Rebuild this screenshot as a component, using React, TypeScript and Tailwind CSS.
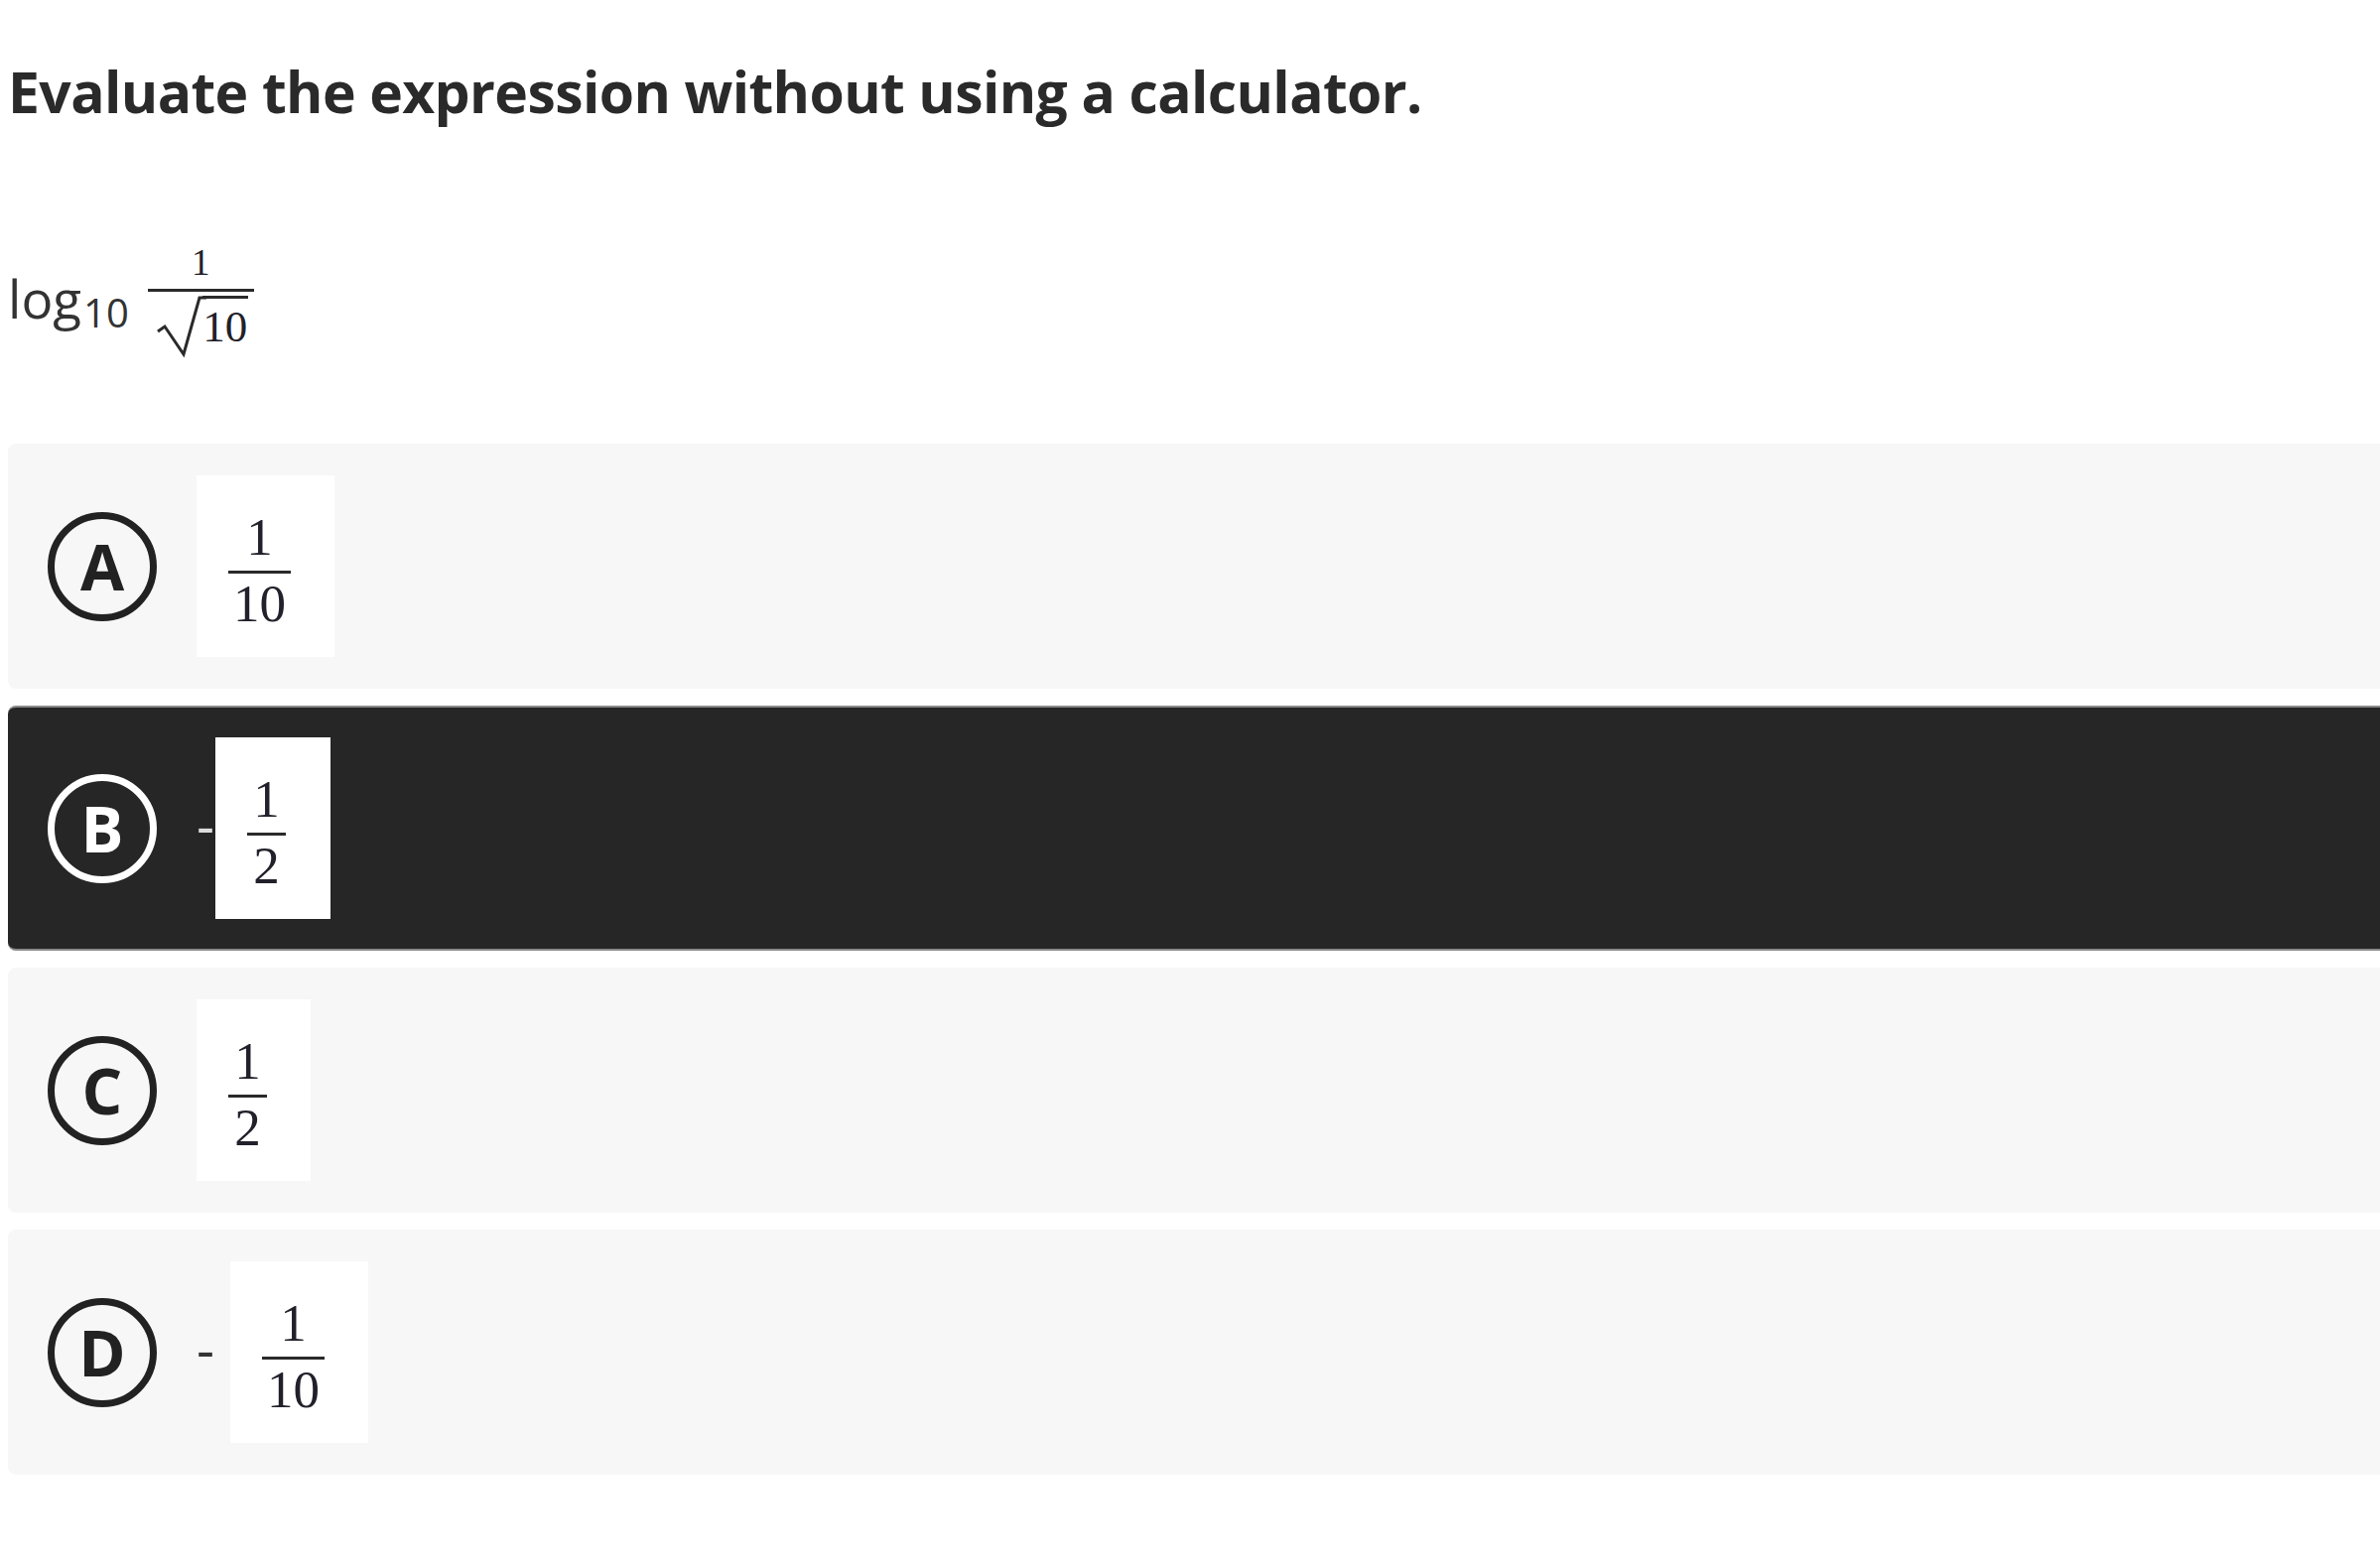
import React from "react";

type Option = {
  letter: string;
  num: string;
  den: string;
  negative: boolean;
  boxW: string;
  selected?: boolean;
};

const options: Option[] = [
  { letter: "A", num: "1", den: "10", negative: false, boxW: "w-[139px]" },
  { letter: "B", num: "1", den: "2", negative: true, boxW: "w-[116px]", selected: true },
  { letter: "C", num: "1", den: "2", negative: false, boxW: "w-[115px]" },
  { letter: "D", num: "1", den: "10", negative: true, boxW: "w-[139px]" },
];

// white box holding a stacked fraction, like the rendered equation images
const FractionBox = ({ num, den, boxW }: { num: string; den: string; boxW: string }) => (
  <div className={`${boxW} h-[183px] bg-white flex flex-col items-start pt-[36px] pl-[32px]`}>
    <div className="flex flex-col items-center font-['Liberation_Serif',serif] text-[#22202a]">
      <span className="text-[53px] leading-none">{num}</span>
      <div className={`h-[3px] bg-[#2a2a2a] mt-[7px] ${den.length > 1 ? "w-[63px]" : "w-[39px]"}`} />
      <span className="text-[53px] leading-none mt-[4px]">{den}</span>
    </div>
  </div>
);

const OptionCard = ({ opt }: { opt: Option }) => {
  const sel = !!opt.selected;
  return (
    <div
      className={`h-[247px] w-[2420px] rounded-lg flex items-center pl-[40px] ${
        sel ? "bg-[#262626] border-t-[2px] border-b-[2px] border-[#8a8a8a]" : "bg-[#f7f7f7]"
      }`}
    >
      <div
        className={`w-[110px] h-[110px] rounded-full border-[7px] flex items-center justify-center shrink-0 ${
          sel ? "border-white text-white" : "border-[#222] text-[#222]"
        }`}
      >
        <span className="text-[64px] font-bold leading-none">{opt.letter}</span>
      </div>
      <div className="flex items-center ml-[40px]">
        {opt.negative && (
          <span
            className={`text-[56px] leading-none mb-[10px] ${
              sel ? "text-[#dcdcdc] mr-[1px]" : "text-[#333] mr-[16px]"
            }`}
          >
            -
          </span>
        )}
        <FractionBox num={opt.num} den={opt.den} boxW={opt.boxW} />
      </div>
    </div>
  );
};

export default function App() {
  return (
    <div className="min-h-screen bg-white overflow-hidden font-['Open_Sans',sans-serif]">
      <div className="pl-2 pt-[64px]">
        <h1 className="text-[57px] font-bold leading-none text-[#2a2a2a] tracking-[-0.6px]">
          Evaluate the expression without using a calculator.
        </h1>

        {/* log10 (1 / sqrt(10)) */}
        <div className="flex items-start mt-[125px] text-[#333]">
          <span className="text-[53px] leading-none mt-[28px]">log</span>
          <span className="text-[40px] leading-none mt-[49px] ml-[2px]">10</span>
          <div className="flex flex-col items-center ml-[19px] font-['Liberation_Serif',serif] text-[#22202a]">
            <span className="text-[37px] leading-none">1</span>
            <div className="w-[107px] h-[3px] bg-[#2a2a2a] mt-[8px]" />
            <div className="flex items-start mt-[4px] ml-[4px]">
              <svg width="50" height="62" viewBox="0 0 50 62" className="-mr-[4px]">
                <path
                  d="M1 36 L8 31 L27 59 L43 2 L50 2"
                  fill="none"
                  stroke="#2a2a2a"
                  strokeWidth="3"
                  strokeLinejoin="miter"
                />
              </svg>
              <div className="flex flex-col">
                <div className="h-[3px] w-[46px] bg-[#2a2a2a]" />
                <span className="text-[45px] leading-none mt-[6px]">10</span>
              </div>
            </div>
          </div>
        </div>

        <div className="flex flex-col gap-[17px] mt-[87px] pb-20">
          {options.map((o) => (
            <OptionCard key={o.letter} opt={o} />
          ))}
        </div>
      </div>
    </div>
  );
}
